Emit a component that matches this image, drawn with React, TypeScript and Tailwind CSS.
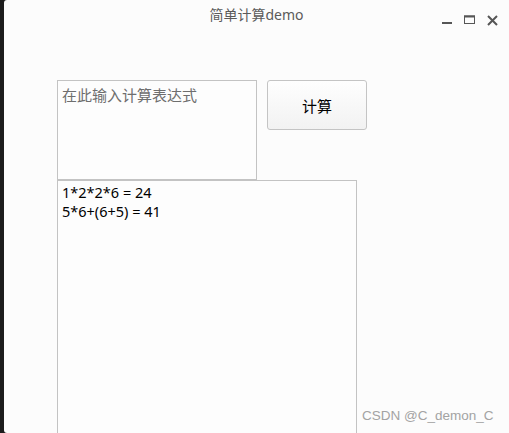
const history = ["1*2*2*6 = 24", "5*6+(6+5) = 41"];

function WindowControls() {
  return (
    <div className="flex items-center gap-[12px] pr-[11px] pt-[10px]">
      <svg width="11" height="10" viewBox="0 0 11 10" className="text-[#565656]">
        <rect x="1" y="7" width="10" height="2" fill="currentColor" />
      </svg>
      <svg width="11" height="10" viewBox="0 0 11 10" className="text-[#565656]">
        <rect x="0.5" y="1" width="10" height="7.5" fill="none" stroke="currentColor" strokeWidth="1" />
        <rect x="0" y="0.5" width="11" height="2" fill="currentColor" />
      </svg>
      <svg width="11" height="11" viewBox="0 0 11 11" className="text-[#565656]">
        <path d="M1 1 L10 10 M10 1 L1 10" stroke="currentColor" strokeWidth="2" />
      </svg>
    </div>
  );
}

export default function App() {
  return (
    <div className="relative flex h-[433px] w-[509px] overflow-hidden bg-[#1c1c1c] font-['Noto_Sans','Noto_Sans_CJK_SC',sans-serif]">
      <div className="flex flex-1 flex-col rounded-l-[3px] bg-[#fcfcfc] ml-[4px]">
        <div className="relative flex h-[30px] shrink-0 justify-end">
          <span className="absolute left-0 right-0 top-[5px] text-center text-[14px] leading-[20px] text-[#5a5a5a]">
            简单计算demo
          </span>
          <WindowControls />
        </div>

        <div className="flex shrink-0 flex-col pl-[53px] pt-[50px]">
          <div className="flex items-start gap-[10px]">
            <textarea
              placeholder="在此输入计算表达式"
              className="h-[100px] w-[200px] resize-none border border-[#c3c3c3] bg-[#fdfdfd] px-[4px] pt-[4px] text-[15px] leading-[20px] text-black outline-none placeholder:text-[#6e6e6e]"
            />
            <button className="flex h-[50px] w-[100px] items-center justify-center rounded-[3px] border border-[#c4c4c4] bg-gradient-to-b from-[#fefefe] to-[#f2f2f2] pt-[3px] text-[15px] text-black">
              计算
            </button>
          </div>
          <div className="h-[260px] w-[300px] shrink-0 border border-[#c3c3c3] bg-[#fdfdfd] px-[4px] pt-[2px] text-[14.5px] leading-[19px] text-black">
            {history.map((line) => (
              <div key={line}>{line}</div>
            ))}
          </div>
        </div>
      </div>

      <span className="absolute left-[362px] top-[408px] font-['Liberation_Sans',sans-serif] text-[13.5px] leading-[16px] text-[#a3a3a3]">
        CSDN @C_demon_C
      </span>
    </div>
  );
}
